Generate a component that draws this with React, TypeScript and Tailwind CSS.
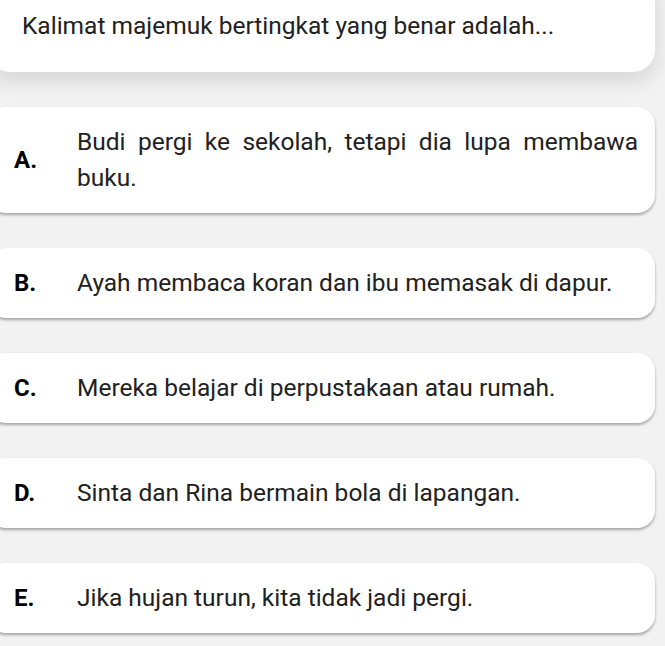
import React from 'react';

const options = [
  { label: 'A.', text: 'Budi pergi ke sekolah, tetapi dia lupa membawa buku.' },
  { label: 'B.', text: 'Ayah membaca koran dan ibu memasak di dapur.' },
  { label: 'C.', text: 'Mereka belajar di perpustakaan atau rumah.' },
  { label: 'D.', text: 'Sinta dan Rina bermain bola di lapangan.' },
  { label: 'E.', text: 'Jika hujan turun, kita tidak jadi pergi.' },
];

const App: React.FC = () => {
  return (
    <div className="min-h-screen w-full overflow-hidden bg-[#f2f2f2] font-['Roboto',sans-serif] text-[#212121]">
      <div className="ml-[-12px] flex w-[667px] flex-col gap-[35px]">
        {/* Question */}
        <div className="mt-[-20px] h-[92px] rounded-b-[22px] bg-white pl-[34px] pt-[30px] shadow-[0_8px_22px_rgba(0,0,0,0.13)]">
          <p className="text-[24.5px] leading-[32px]">Kalimat majemuk bertingkat yang benar adalah...</p>
        </div>

        {/* Options */}
        {options.map((o) => (
          <div
            key={o.label}
            className="flex items-center rounded-[18px] bg-white py-[17px] pl-[26px] pr-[17px] shadow-[0_2px_3px_rgba(0,0,0,0.32)]"
          >
            <span className="w-[63px] shrink-0 text-[24px] font-bold text-black">{o.label}</span>
            <p className="flex-1 text-justify text-[24.5px] leading-[36px]">{o.text}</p>
          </div>
        ))}
      </div>
    </div>
  );
};

export default App;
